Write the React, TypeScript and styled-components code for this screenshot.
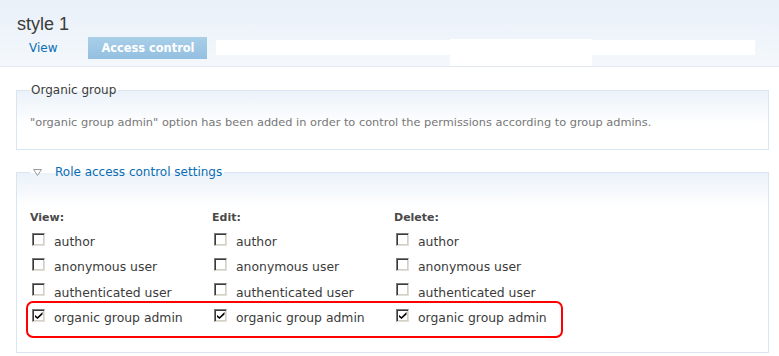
import React from "react";
import styled, { createGlobalStyle } from "styled-components";

const Global = createGlobalStyle`
  html, body { margin: 0; padding: 0; background: #fff; }
  body { font-family: "DejaVu Sans", Verdana, sans-serif; width: 779px; height: 356px; overflow: hidden; }
`;

const Page = styled.div`
  width: 779px;
  height: 356px;
  background: linear-gradient(#fbfcfe, #ffffff 40px);
`;

const Header = styled.header`
  height: 67px;
  box-sizing: border-box;
  border-bottom: 1px solid #e1e8f0;
  background: linear-gradient(#e9f0f8, #f4f8fc);
  padding: 0 0 0 17px;
`;

const Title = styled.h1`
  margin: 0;
  padding-top: 13px;
  font-family: "Liberation Sans", Arial, sans-serif;
  font-weight: normal;
  font-size: 18px;
  line-height: 22px;
  color: #3b3b3b;
`;

const Tabs = styled.ul`
  list-style: none;
  margin: 2px 0 0;
  padding: 0;
  display: flex;
  align-items: flex-start;
`;

const TabLink = styled.li<{ $active?: boolean }>`
  height: 22px;
  box-sizing: border-box;
  white-space: nowrap;
  padding: ${(p) => (p.$active ? "0" : "0 31px 0 12px")};
  width: ${(p) => (p.$active ? "119px" : "auto")};
  text-align: center;
  font-size: ${(p) => (p.$active ? "11.4px" : "12px")};
  line-height: 22px;
  margin-right: ${(p) => (p.$active ? "9px" : "0")};
  color: ${(p) => (p.$active ? "#fff" : "#0a6db4")};
  font-weight: ${(p) => (p.$active ? "bold" : "normal")};
  background: ${(p) => (p.$active ? "linear-gradient(#a9cfe8, #93bfe0)" : "transparent")};
`;

const Redacted = styled.li<{ $w: number; $tall?: boolean }>`
  width: ${(p) => p.$w}px;
  height: ${(p) => (p.$tall ? 27 : 15)}px;
  margin-top: ${(p) => (p.$tall ? 2 : 3)}px;
  background: #fff;
`;

const Content = styled.main`
  padding: 16px 10px 0 16px;
`;

const Fieldset = styled.fieldset<{ $h: number }>`
  margin: 0 0 15px;
  padding: 0 12px 0 13px;
  border: 1px solid #d9e5f0;
  height: ${(p) => p.$h}px;
  box-sizing: border-box;
  background: linear-gradient(#ebf2f9, #ffffff 34px);
`;

const Legend = styled.legend<{ $link?: boolean }>`
  padding: 0 2px 0 1px;
  margin-left: 0;
  font-size: 12px;
  line-height: 15px;
  color: ${(p) => (p.$link ? "#0a6db4" : "#3b3b3b")};
  display: flex;
  align-items: center;
`;

const Arrow = styled.svg`
  width: 9px;
  height: 7px;
  margin: 0 13px 0 2px;
`;

const Description = styled.p`
  margin: 17px 0 0 0;
  font-size: 11.35px;
  line-height: 14px;
  color: #777;
`;

const Grid = styled.div`
  position: relative;
  display: grid;
  grid-template-columns: 182px 182px 182px;
  margin-top: 31px;
`;

const Column = styled.div`
  display: flex;
  flex-direction: column;
`;

const Heading = styled.div`
  font-size: 11px;
  font-weight: bold;
  color: #494949;
  line-height: 14px;
  margin-bottom: 4px;
`;

const Row = styled.label`
  display: flex;
  align-items: center;
  height: 25.3px;
  font-size: 12.4px;
  color: #3b3b3b;
`;

const Box = styled.span`
  width: 13px;
  height: 13px;
  box-sizing: border-box;
  margin: -5px 9px 0 2px;
  border-style: solid;
  border-width: 1px;
  border-color: #7b7b7b #e2dfd8 #e2dfd8 #7b7b7b;
  box-shadow: inset 1px 1px 0 #3a3a3a, inset -1px -1px 0 #d4d0c8;
  background: #fff;
  display: flex;
  align-items: center;
  justify-content: center;
`;

const Highlight = styled.div`
  position: absolute;
  left: -4px;
  top: 90px;
  width: 537px;
  height: 37px;
  border: 2px solid #f00;
  border-radius: 7px;
  box-sizing: border-box;
  pointer-events: none;
`;

const roles = ["author", "anonymous user", "authenticated user", "organic group admin"];
const cols = ["View:", "Edit:", "Delete:"];

function Check({ on }: { on: boolean }) {
  return (
    <Box>
      {on && (
        <svg width="8" height="7" viewBox="0 0 8 7">
          <path d="M0 3 L2.5 5 L7.5 0 L7.5 2.5 L2.5 7 L0 5 Z" fill="#000" />
        </svg>
      )}
    </Box>
  );
}

export default function App() {
  return (
    <Page>
      <Global />
      <Header>
        <Title>style 1</Title>
        <Tabs>
          <TabLink>View</TabLink>
          <TabLink $active>Access control</TabLink>
          <Redacted $w={234} />
          <Redacted $w={142} $tall />
          <Redacted $w={163} />
        </Tabs>
      </Header>
      <Content>
        <Fieldset $h={67}>
          <Legend>Organic group</Legend>
          <Description>
            "organic group admin" option has been added in order to control the permissions according to group admins.
          </Description>
        </Fieldset>
        <Fieldset $h={188}>
          <Legend $link>
            <Arrow viewBox="0 0 9 7">
              <path d="M0.5 0.5 H8.5 L4.5 6.5 Z" fill="none" stroke="#9a9a9a" strokeWidth="1" />
            </Arrow>
            Role access control settings
          </Legend>
          <Grid>
            {cols.map((c) => (
              <Column key={c}>
                <Heading>{c}</Heading>
                {roles.map((r) => (
                  <Row key={r}>
                    <Check on={r === "organic group admin"} />
                    {r}
                  </Row>
                ))}
              </Column>
            ))}
            <Highlight />
          </Grid>
        </Fieldset>
      </Content>
    </Page>
  );
}
